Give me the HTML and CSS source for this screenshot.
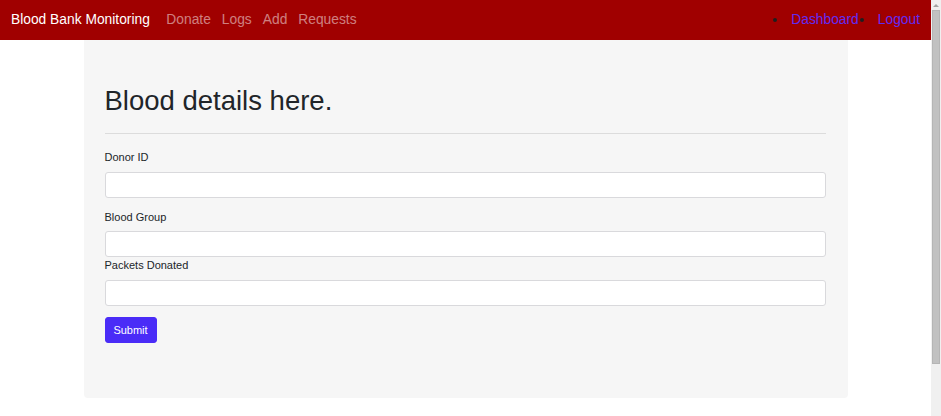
FILE: index.html
```html
<!DOCTYPE html>
<html lang="en">
<head>
<meta charset="utf-8">
<title>Blood Bank Monitoring</title>
<link rel="stylesheet" href="styles.css">
</head>
<body>
<div class="page">
  <nav class="navbar">
    <div class="nav-left">
      <a class="brand" href="#">Blood Bank Monitoring</a>
      <a class="nav-link" href="#">Donate</a>
      <a class="nav-link" href="#">Logs</a>
      <a class="nav-link" href="#">Add</a>
      <a class="nav-link" href="#">Requests</a>
    </div>
    <ul class="nav-right">
      <li class="nav-item"><span class="dot"></span><a href="#">Dashboard</a></li>
      <li class="nav-item"><span class="dot"></span><a href="#">Logout</a></li>
    </ul>
  </nav>
  <main class="container">
    <section class="jumbotron">
      <h1 class="title">Blood details here.</h1>
      <hr class="divider">
      <form class="form">
        <div class="group">
          <label class="label" for="donor">Donor ID</label>
          <input class="input" id="donor" type="text">
        </div>
        <div class="group tight">
          <label class="label" for="bg">Blood Group</label>
          <input class="input" id="bg" type="text">
        </div>
        <div class="group">
          <label class="label" for="packets">Packets Donated</label>
          <input class="input" id="packets" type="text">
        </div>
        <button class="btn" type="button">Submit</button>
      </form>
    </section>
  </main>
</div>
<div class="scrollbar" aria-hidden="true">
  <div class="sb-arrow"><span class="sb-tri"></span></div>
  <div class="sb-thumb"></div>
</div>
</body>
</html>
```
FILE: styles.css
```css
* {
  box-sizing: border-box;
}
body {
  margin: 0;
  height: 100vh;
  overflow: hidden;
  display: flex;
  font-family: "Liberation Sans", Arial, sans-serif;
  font-size: 11px;
  line-height: 1.5;
  color: #212529;
  background: #fff;
}
.page {
  flex: 1;
  min-width: 0;
}
.scrollbar {
  width: 10px;
  flex: none;
  background: #f0f0f0;
  display: flex;
  flex-direction: column;
  align-items: center;
}
.sb-arrow {
  height: 10px;
  width: 100%;
  display: flex;
  align-items: center;
  justify-content: center;
}
.sb-tri {
  width: 0;
  height: 0;
  border-left: 3px solid transparent;
  border-right: 3px solid transparent;
  border-bottom: 3px solid #a3a3a3;
}
.sb-thumb {
  width: 8px;
  height: 354px;
  background: #c1c1c1;
  border: 1px solid #b5b5b5;
}
.navbar {
  height: 40px;
  background: #a00000;
  display: flex;
  align-items: center;
  justify-content: space-between;
  padding: 0 11px;
}
.nav-left {
  display: flex;
  align-items: center;
}
.brand {
  color: #fff;
  font-size: 13.8px;
  text-decoration: none;
  margin-right: 11px;
  line-height: 20px;
}
.nav-link {
  color: rgba(255, 255, 255, 0.5);
  font-size: 13.8px;
  text-decoration: none;
  padding: 0 5.5px;
  line-height: 20px;
}
.nav-right {
  list-style: none;
  margin: 0;
  padding: 0;
  display: flex;
  align-items: center;
}
.nav-item {
  display: flex;
  align-items: center;
  font-size: 13.8px;
  line-height: 20px;
}
.nav-item a {
  color: #5f2cf2;
  text-decoration: none;
}
.dot {
  width: 4px;
  height: 4px;
  border-radius: 50%;
  background: #1e1e1e;
  margin-left: 1px;
  margin-right: 14px;
}
.container {
  width: 764px;
  margin: 0 auto;
}
.jumbotron {
  background: #f6f6f6;
  border-radius: 0 0 4px 4px;
  padding: 44px 22px 44px 21px;
}
.title {
  margin: 0;
  font-size: 27.5px;
  font-weight: 400;
  line-height: 1.2;
  color: #212529;
}
.divider {
  margin: 16px 0 15px;
  border: 0;
  border-top: 1px solid #dcdcdc;
}
.form {
  display: flex;
  flex-direction: column;
  align-items: flex-start;
  margin-bottom: 11px;
}
.group {
  width: 100%;
  display: flex;
  flex-direction: column;
  margin-bottom: 11px;
}
.group.tight {
  margin-bottom: 0;
}
.label {
  margin-bottom: 6px;
  line-height: 16.5px;
}
.input {
  height: 26px;
  width: 100%;
  border: 1px solid #d9d9dc;
  border-radius: 3px;
  background: #fff;
  padding: 4px 8px;
  font: inherit;
}
.btn {
  width: 52px;
  height: 26px;
  border: 1px solid #4a2cf7;
  border-radius: 3px;
  background: #4a2cf7;
  color: #fff;
  font-family: "Liberation Sans", Arial, sans-serif;
  font-size: 11px;
  padding: 0;
}
```
